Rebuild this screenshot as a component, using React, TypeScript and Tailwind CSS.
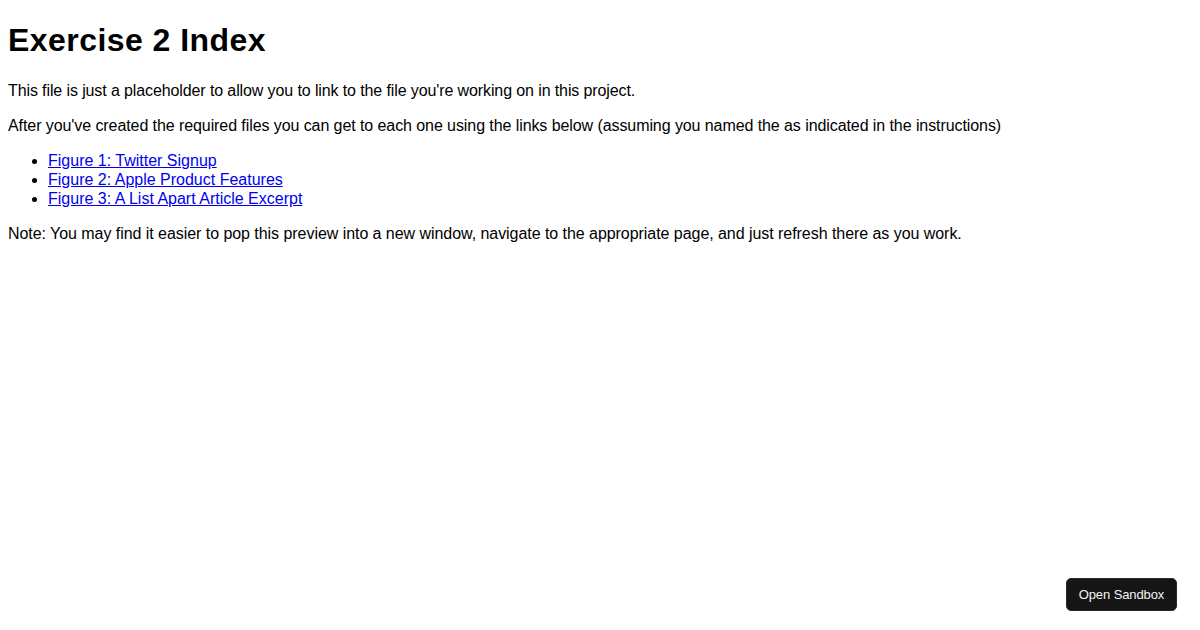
export default function App() {
  return (
    <div className="min-h-screen bg-white px-2 pt-[22px] text-black font-['Liberation_Sans',Arial,sans-serif] text-[16px] leading-[19px] tracking-[-0.08px]">
      <h1 className="text-[32px] font-bold leading-[37px] tracking-[0.45px] mb-[21.5px]">Exercise 2 Index</h1>

      <p className="mb-4 tracking-[-0.11px]">This file is just a placeholder to allow you to link to the file you're working on in this project.</p>

      <p className="mb-4">
        After you've created the required files you can get to each one using the links below (assuming you named the as indicated in the instructions)
      </p>

      <ul className="list-disc pl-10 mb-4">
        <li>
          <a href="#" className="text-[#0000ee] underline tracking-normal">Figure 1: Twitter Signup</a>
        </li>
        <li>
          <a href="#" className="text-[#0000ee] underline tracking-normal">Figure 2: Apple Product Features</a>
        </li>
        <li>
          <a href="#" className="text-[#0000ee] underline tracking-normal">Figure 3: A List Apart Article Excerpt</a>
        </li>
      </ul>

      <p className="tracking-[-0.05px]">Note: You may find it easier to pop this preview into a new window, navigate to the appropriate page, and just refresh there as you work.</p>

      {/* Sandbox button */}
      <button className="fixed right-[23px] bottom-[19px] h-[33px] w-[111px] rounded-[5px] border border-[#2a2a2a] bg-[#151515] text-center text-[13px] tracking-[-0.1px] text-[#f2f2f2] font-['Liberation_Sans',Arial,sans-serif]">
        Open Sandbox
      </button>
    </div>
  )
}
